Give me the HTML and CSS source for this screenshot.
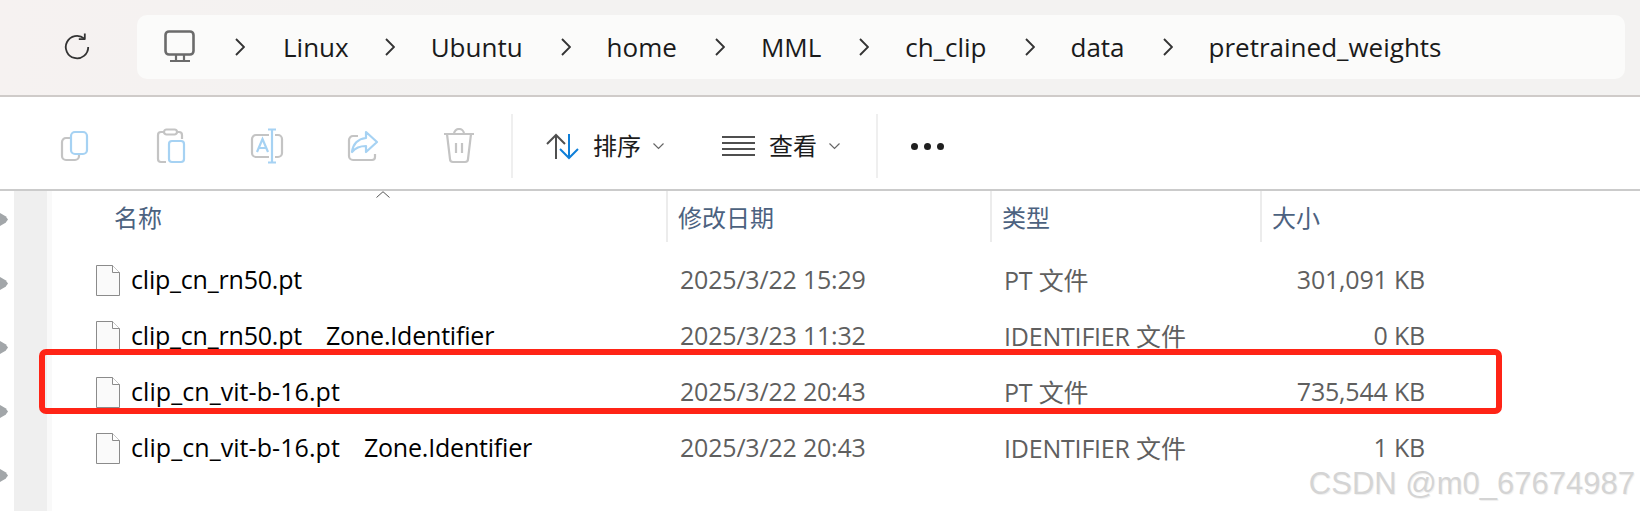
FILE: index.html
```html
<!DOCTYPE html>
<html lang="zh-CN">
<head>
<meta charset="utf-8">
<title>pretrained_weights</title>
<link rel="stylesheet" href="styles.css">
</head>
<body>
<div class="window">
  <header class="topbar">
    <button class="reload" aria-label="refresh">
      <svg width="34" height="34" viewBox="0 0 34 34" fill="none" stroke="#333" stroke-width="1.8"><path d="M24.3 8.6A11.2 11.2 0 1 0 28.2 17"/><path d="M24.8 3.5v5.6h-6" stroke-linejoin="round"/></svg>
    </button>
    <nav class="crumbs">
      <svg class="pc" width="32" height="33" viewBox="0 0 32 33" fill="none" stroke="#6b6b6b" stroke-width="2.6"><rect x="1.5" y="1.5" width="28" height="23" rx="3.5"/><path d="M12 25v5M20 25v5M6 31h20" stroke-width="2.2"/></svg>
      <svg class="chev" width="10" height="18" viewBox="0 0 10 18" fill="none" stroke="#333" stroke-width="1.9"><path d="M1 1l8 8-8 8"/></svg>
      <span>Linux</span>
      <svg class="chev" width="10" height="18" viewBox="0 0 10 18" fill="none" stroke="#333" stroke-width="1.9"><path d="M1 1l8 8-8 8"/></svg>
      <span>Ubuntu</span>
      <svg class="chev" width="10" height="18" viewBox="0 0 10 18" fill="none" stroke="#333" stroke-width="1.9"><path d="M1 1l8 8-8 8"/></svg>
      <span>home</span>
      <svg class="chev" width="10" height="18" viewBox="0 0 10 18" fill="none" stroke="#333" stroke-width="1.9"><path d="M1 1l8 8-8 8"/></svg>
      <span>MML</span>
      <svg class="chev" width="10" height="18" viewBox="0 0 10 18" fill="none" stroke="#333" stroke-width="1.9"><path d="M1 1l8 8-8 8"/></svg>
      <span>ch_clip</span>
      <svg class="chev" width="10" height="18" viewBox="0 0 10 18" fill="none" stroke="#333" stroke-width="1.9"><path d="M1 1l8 8-8 8"/></svg>
      <span>data</span>
      <svg class="chev" width="10" height="18" viewBox="0 0 10 18" fill="none" stroke="#333" stroke-width="1.9"><path d="M1 1l8 8-8 8"/></svg>
      <span>pretrained_weights</span>
    </nav>
  </header>

  <section class="toolbar">
    <div class="tool">
      <svg width="30" height="32" viewBox="0 0 30 32" fill="none" stroke-width="2.2"><path d="M10 8H6a4 4 0 0 0-4 4v14a4 4 0 0 0 4 4h9a4 4 0 0 0 4-4v-2" stroke="#c4c4c4"/><rect x="11" y="2" width="16" height="22" rx="4" stroke="#a6d2f3"/></svg>
    </div>
    <div class="tool">
      <svg width="30" height="36" viewBox="0 0 30 36" fill="none" stroke-width="2.2"><path d="M8 4H5a3 3 0 0 0-3 3v24a3 3 0 0 0 3 3h5M21 4h2a3 3 0 0 1 3 3v4" stroke="#c4c4c4"/><rect x="8" y="1.5" width="13" height="5" rx="2.5" stroke="#c4c4c4"/><rect x="13" y="13" width="15" height="21" rx="3" stroke="#a6d2f3"/></svg>
    </div>
    <div class="tool">
      <svg width="34" height="36" viewBox="0 0 34 36" fill="none" stroke-width="2.2"><path d="M19 7H6a4 4 0 0 0-4 4v14a4 4 0 0 0 4 4h13M25 7h3a4 4 0 0 1 4 4v14a4 4 0 0 1-4 4h-3" stroke="#c4c4c4"/><path d="M22 2v32M18 1.500h8M18 34.500h8M7 24l5.500-13L18 24M9 20h7" stroke="#a6d2f3"/></svg>
    </div>
    <div class="tool">
      <svg width="32" height="32" viewBox="0 0 32 32" fill="none" stroke-width="2.2"><path d="M11 6H6a4 4 0 0 0-4 4v16a4 4 0 0 0 4 4h19a3 3 0 0 0 3-3v-3" stroke="#c4c4c4"/><path d="M19 2l11 10-11 10v-6c-6 0-10 1-14 6 1-8 6-13 14-14z" stroke="#a6d2f3" stroke-linejoin="round"/></svg>
    </div>
    <div class="tool">
      <svg width="32" height="36" viewBox="0 0 32 36" fill="none" stroke="#c4c4c4" stroke-width="2.2"><path d="M1 6h30M11 6a5 5 0 0 1 10 0M4 6l3 25a3 3 0 0 0 3 3h12a3 3 0 0 0 3-3l3-25M13 15v10M19 15v10"/></svg>
    </div>
    <div class="sep"></div>
    <div class="action sort">
      <svg width="33" height="27" viewBox="0 0 33 27" fill="none" stroke-width="2"><path d="M10 26V2M1 11l9-9 9 9" stroke="#4f4f4f"/><path d="M23 1v24M14 16l9 9 9-9" stroke="#0f7fd8"/></svg>
      <span>排序</span>
      <svg class="down" width="11" height="7" viewBox="0 0 11 7" fill="none" stroke="#666" stroke-width="1.2"><path d="M.5.500l5 5 5-5"/></svg>
    </div>
    <div class="action view">
      <svg width="33" height="22" viewBox="0 0 33 22" fill="none" stroke="#4f4f4f" stroke-width="2"><path d="M0 2h33M0 8h33M0 14h33M0 20h33"/></svg>
      <span>查看</span>
      <svg class="down" width="11" height="7" viewBox="0 0 11 7" fill="none" stroke="#666" stroke-width="1.2"><path d="M.5.500l5 5 5-5"/></svg>
    </div>
    <div class="sep sep-b"></div>
    <div class="more"><i></i><i></i><i></i></div>
  </section>

  <main class="body">
    <aside class="side">
      <div class="tree"><i></i><i></i><i></i><i></i><i></i></div>
      <div class="strip"></div>
      <div class="edge"></div>
    </aside>
    <div class="list">
      <div class="row head">
        <div class="cell name-h">名称
          <svg class="caret" width="14" height="7" viewBox="0 0 14 7" fill="none" stroke="#555" stroke-width="1"><path d="M.5 6.500L7 .7l6.500 5.800"/></svg>
        </div>
        <div class="cell">修改日期</div>
        <div class="cell">类型</div>
        <div class="cell">大小</div>
      </div>
      <div class="rows">
        <div class="row file">
          <div class="cell fname"><svg class="doc" width="24" height="31" viewBox="0 0 24 31"><path d="M.5.500h16l7 7v23H.5z" fill="#fafafa" stroke="#8b8b8b"/><path d="M16.500.500v7h7" fill="#fff" stroke="#8b8b8b"/></svg><span class="fn">clip_cn_rn50.pt</span></div>
          <div class="cell">2025/3/22 15:29</div>
          <div class="cell">PT 文件</div>
          <div class="cell size">301,091 KB</div>
        </div>
        <div class="row file">
          <div class="cell fname"><svg class="doc" width="24" height="31" viewBox="0 0 24 31"><path d="M.5.500h16l7 7v23H.5z" fill="#fafafa" stroke="#8b8b8b"/><path d="M16.500.500v7h7" fill="#fff" stroke="#8b8b8b"/></svg><span class="fn">clip_cn_rn50.pt<span class="stream">Zone.Identifier</span></span></div>
          <div class="cell">2025/3/23 11:32</div>
          <div class="cell">IDENTIFIER 文件</div>
          <div class="cell size">0 KB</div>
        </div>
        <div class="row file">
          <div class="cell fname"><svg class="doc" width="24" height="31" viewBox="0 0 24 31"><path d="M.5.500h16l7 7v23H.5z" fill="#fafafa" stroke="#8b8b8b"/><path d="M16.500.500v7h7" fill="#fff" stroke="#8b8b8b"/></svg><span class="fn vit">clip_cn_vit-b-16.pt</span></div>
          <div class="cell">2025/3/22 20:43</div>
          <div class="cell">PT 文件</div>
          <div class="cell size">735,544 KB</div>
        </div>
        <div class="row file">
          <div class="cell fname"><svg class="doc" width="24" height="31" viewBox="0 0 24 31"><path d="M.5.500h16l7 7v23H.5z" fill="#fafafa" stroke="#8b8b8b"/><path d="M16.500.500v7h7" fill="#fff" stroke="#8b8b8b"/></svg><span class="fn vit">clip_cn_vit-b-16.pt<span class="stream">Zone.Identifier</span></span></div>
          <div class="cell">2025/3/22 20:43</div>
          <div class="cell">IDENTIFIER 文件</div>
          <div class="cell size">1 KB</div>
        </div>
      </div>
    </div>
  </main>

  <div class="highlight"></div>
  <div class="watermark">CSDN @m0_67674987</div>
</div>
</body>
</html>
```

FILE: styles.css
```css
* { box-sizing: border-box; }
html, body { margin: 0; padding: 0; background: #fff; }
.window {
  position: relative;
  width: 1640px;
  height: 511px;
  overflow: hidden;
  font-family: "Open Sans", "Noto Sans CJK SC", sans-serif;
  color: #1a1a1a;
}
.topbar {
  display: flex;
  align-items: center;
  height: 97px;
  padding: 15px 15px 17px 60px;
  background: linear-gradient(90deg, #f6f2f1 0, #f3f2f1 30%);
  border-bottom: 2px solid #cfcbc9;
}
.reload {
  width: 34px;
  height: 34px;
  margin-right: 43px;
  padding: 0;
  border: 0;
  background: none;
  display: flex;
}
.crumbs {
  flex: 1;
  height: 64px;
  display: flex;
  align-items: center;
  padding-left: 27px;
  border-radius: 10px;
  background: #fbfbfa;
  font-size: 26px;
}
.crumbs span { white-space: nowrap; }
.pc { margin-right: 39px; }
.chev { margin: 0 36px 0 38px; flex: none; }
.pc + .chev { margin-left: 0; }
.pc + .chev + span { margin: 0 -2px 0 2px; }

.toolbar {
  display: flex;
  align-items: center;
  height: 94px;
  padding: 6px 0 0 27px;
  border-bottom: 2px solid #cbcbcb;
}
.tool {
  width: 96px;
  display: flex;
  justify-content: center;
}
.sep {
  width: 2px;
  height: 64px;
  margin-left: 4px;
  background: #efefef;
}
.sep-b { margin-left: 36px; }
.action {
  display: flex;
  align-items: center;
  font-size: 24px;
  color: #1c1c1c;
}
.sort { margin-left: 33px; }
.view { margin-left: 58px; }
.action span { margin-left: 14px; line-height: 32px; }
.down { margin-left: 12px; }
.more {
  display: flex;
  gap: 6px;
  margin-left: 33px;
}
.more i {
  width: 7px;
  height: 7px;
  border-radius: 50%;
  background: #1f1f1f;
}

.body {
  display: flex;
  height: 320px;
}
.side {
  display: flex;
  flex: none;
  width: 52px;
}
.tree {
  width: 14px;
  display: flex;
  flex-direction: column;
  gap: 51px;
  padding-top: 22px;
}
.tree i {
  display: block;
  width: 8px;
  height: 13px;
  background: #a2a6a9;
  clip-path: polygon(0 0, 70% 25%, 100% 50%, 70% 75%, 0 100%);
}
.strip { width: 33px; background: #efefef; }
.edge { width: 5px; background: #f9f9f9; }

.list { flex: 1; }
.row {
  display: grid;
  grid-template-columns: 614px 324px 270px 180px;
}
.head {
  height: 51px;
  font-size: 24px;
  color: #4c6280;
}
.head .cell {
  position: relative;
  display: flex;
  align-items: center;
  padding-left: 10px;
  border-left: 2px solid #ececec;
}
.head .name-h { padding-left: 62px; border-left: 0; }
.caret { position: absolute; left: 324px; top: 0; }
.rows { padding-top: 10px; }
.file {
  height: 56px;
  align-items: center;
  font-size: 25px;
  letter-spacing: -0.2px;
  color: #5f5f5f;
}
.file .cell { padding: 0 0 3px 14px; white-space: nowrap; }
.file .fname {
  display: flex;
  align-items: center;
  padding: 0 0 0 44px;
  color: #000;
}
.fn { padding-bottom: 3px; }
.vit { letter-spacing: 0.07px; }
.doc { flex: none; margin-right: 11px; }
.stream { margin-left: 24px; letter-spacing: -0.2px; }
.file .size { text-align: right; padding: 0 15px 3px 0; }

.highlight {
  position: absolute;
  left: 39px;
  top: 349px;
  width: 1463px;
  height: 65px;
  border: 6px solid #ff2416;
  border-radius: 7px;
}
.watermark {
  position: absolute;
  right: 5px;
  top: 466px;
  font-family: "Liberation Sans", sans-serif;
  font-size: 31px;
  line-height: 36px;
  color: #d4d4d4;
  text-shadow: 1px 1px 1px #efefef;
  white-space: nowrap;
}
```
